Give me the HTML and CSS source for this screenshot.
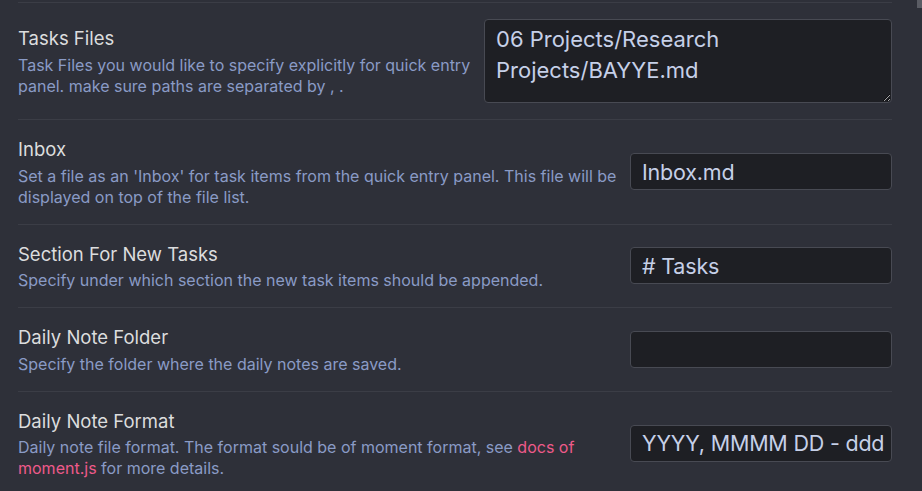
FILE: index.html
```html
<!DOCTYPE html>
<html lang="en">
<head>
<meta charset="utf-8">
<title>Settings</title>
<link rel="stylesheet" href="styles.css">
</head>
<body>
<div class="scroll-thumb"></div>
<div class="settings">
  <div class="setting-item">
    <div class="info">
      <div class="name">Tasks Files</div>
      <div class="desc">Task Files you would like to specify explicitly for quick entry panel. make sure paths are separated by , .</div>
    </div>
    <div class="control">
      <textarea class="textarea" spellcheck="false">06 Projects/Research Projects/BAYYE.md</textarea>
    </div>
  </div>
  <div class="setting-item">
    <div class="info">
      <div class="name">Inbox</div>
      <div class="desc">Set a file as an 'Inbox' for task items from the quick entry panel. This file will be displayed on top of the file list.</div>
    </div>
    <div class="control">
      <input class="text-input" type="text" value="Inbox.md" spellcheck="false">
    </div>
  </div>
  <div class="setting-item">
    <div class="info">
      <div class="name">Section For New Tasks</div>
      <div class="desc">Specify under which section the new task items should be appended.</div>
    </div>
    <div class="control">
      <input class="text-input" type="text" value="# Tasks" spellcheck="false">
    </div>
  </div>
  <div class="setting-item">
    <div class="info">
      <div class="name">Daily Note Folder</div>
      <div class="desc">Specify the folder where the daily notes are saved.</div>
    </div>
    <div class="control">
      <input class="text-input" type="text" value="" spellcheck="false">
    </div>
  </div>
  <div class="setting-item">
    <div class="info">
      <div class="name">Daily Note Format</div>
      <div class="desc">Daily note file format. The format sould be of moment format, see <a class="link" href="#">docs of moment.js</a> for more details.</div>
    </div>
    <div class="control">
      <input class="text-input" type="text" value="YYYY, MMMM DD - ddd" spellcheck="false">
    </div>
  </div>
</div>
</body>
</html>
```

FILE: styles.css
```css
html, body {
  margin: 0;
  padding: 0;
  background: #2e3039;
  height: 100%;
  overflow: hidden;
  color-scheme: dark;
}

body {
  font-family: Inter, "Noto Sans", sans-serif;
  position: relative;
}

.scroll-thumb {
  position: absolute;
  top: 0;
  right: 0;
  width: 5px;
  height: 8px;
  background: #5a5c64;
}

.settings {
  width: 874px;
  margin: 2px 0 0 18px;
}

.setting-item {
  display: flex;
  align-items: center;
  gap: 12px;
  border-top: 1px solid #3b3d46;
  padding: 16px 0;
}

.info {
  flex: 1 1 auto;
  min-width: 0;
}

.name {
  font-size: 18.5px;
  line-height: 24px;
  padding-top: 1px;
  margin-bottom: -1px;
  color: #dcddde;
}

.desc {
  font-size: 16px;
  line-height: 21px;
  padding-top: 5.5px;
  color: #8a9bc6;
}

.link {
  color: #ee5a8a;
  text-decoration: none;
}

.control {
  flex: 0 0 auto;
  display: flex;
  justify-content: flex-end;
}

.textarea {
  box-sizing: border-box;
  width: 408px;
  height: 84px;
  margin: 0;
  padding: 4px 11px;
  background: #1e1f24;
  border: 1px solid #484a53;
  border-radius: 4px;
  color: #c6d0e8;
  font-family: Inter, "Noto Sans", sans-serif;
  font-size: 22px;
  line-height: 31px;
  outline: none;
}

.text-input {
  box-sizing: border-box;
  width: 262px;
  height: 37px;
  margin: 0;
  padding: 0 4px 0 11px;
  background: #1e1f24;
  border: 1px solid #484a53;
  border-radius: 4px;
  color: #c6d0e8;
  font-family: Inter, "Noto Sans", sans-serif;
  font-size: 21.5px;
  letter-spacing: -0.2px;
  outline: none;
}
```
